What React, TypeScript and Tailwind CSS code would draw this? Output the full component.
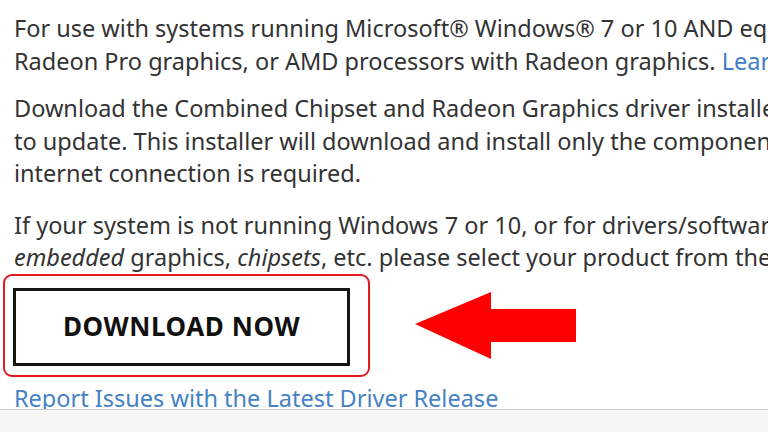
const font = { fontFamily: '"Noto Sans", "Open Sans", sans-serif' };

function LeftArrow() {
  return (
    <svg
      className="absolute left-0 top-0"
      width="768"
      height="432"
      viewBox="0 0 768 432"
    >
      <polygon
        points="415,324 491,292 491,309 576,309 576,342 491,342 491,359"
        fill="#ff0000"
      />
    </svg>
  );
}

export default function App() {
  return (
    <div
      className="relative w-[768px] h-[432px] overflow-hidden bg-white text-[#333333]"
      style={font}
    >
      <div className="w-[1100px] pl-[14px] pt-[12px] text-[23.5px] leading-[32.5px]">
        <p className="whitespace-nowrap">
          For use with systems running Microsoft® Windows® 7 or 10 AND equipped with AMD Radeon™ graphics,
          <br />
          Radeon Pro graphics, or AMD processors with Radeon graphics.{" "}
          <a className="text-[#3f7fc8]">Learn more</a>
        </p>
        <p className="mt-[15px] whitespace-nowrap">
          Download the Combined Chipset and Radeon Graphics driver installer and run it on the system you want
          <br />
          to update. This installer will download and install only the components required for your system. An
          <br />
          internet connection is required.
        </p>
        <p className="mt-[19px] whitespace-nowrap">
          If your system is not running Windows 7 or 10, or for drivers/software for other products such as
          <br />
          <em>embedded</em> graphics, <em>chipsets</em>, etc. please select your product from the menu below.
        </p>
        <div className="ml-[-11px] w-[367px] rounded-[9px] border-2 border-[#e3191c] pl-[8px] pt-[12px] pb-[9px]">
          <button className="flex h-[78px] w-[337px] items-center justify-center border-[3px] border-[#151515] bg-white text-[26px] font-bold tracking-[0.6px] text-[#111111]">
            DOWNLOAD NOW
          </button>
        </div>
        <a className="mt-[5px] block text-[#4582c4]">Report Issues with the Latest Driver Release</a>
      </div>
      <div className="absolute bottom-0 left-0 h-[23px] w-full border-t border-[#c9c9c9] bg-[#f7f7f7]" />
      <LeftArrow />
    </div>
  );
}
